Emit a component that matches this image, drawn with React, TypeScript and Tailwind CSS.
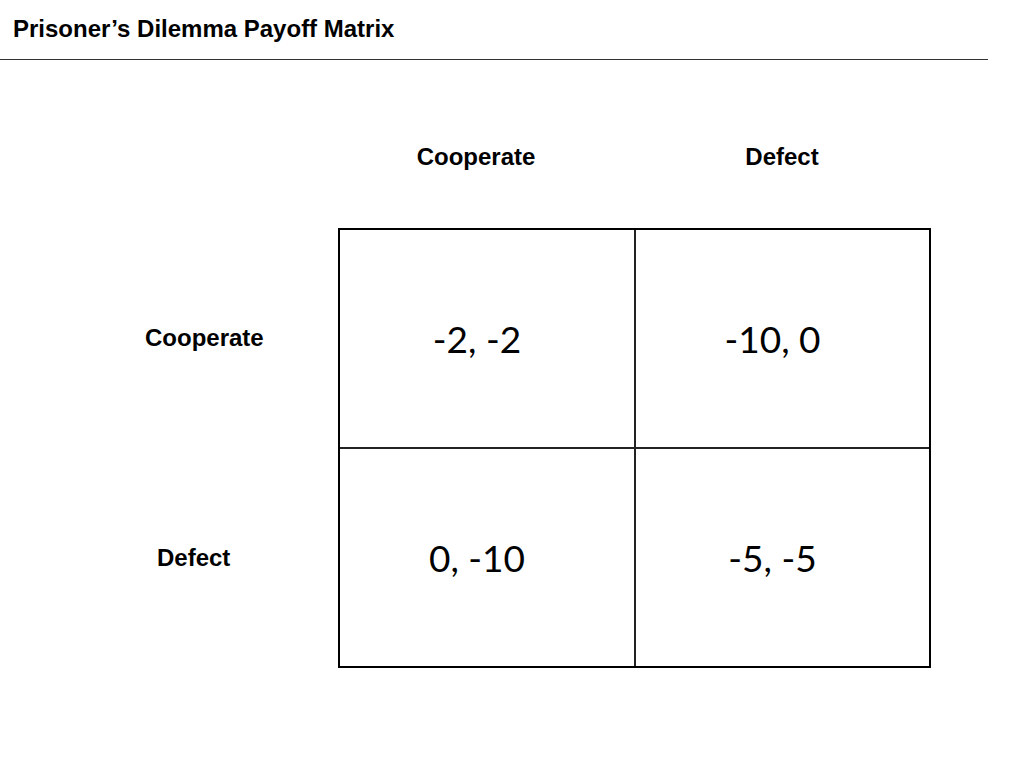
const payoffs = [
  ['-2, -2', '-10, 0'],
  ['0, -10', '-5, -5'],
];

const rows = [
  { label: 'Cooperate', indent: 'pl-[145px]' },
  { label: 'Defect', indent: 'pl-[157px]' },
];

export default function App() {
  return (
    <div className="w-[1024px] h-[768px] bg-white text-black font-['Liberation_Sans',Arial,sans-serif]">
      <div className="w-[988px] h-[60px] border-b border-[#333] pl-[13px] pt-[15px]">
        <h1 className="text-[24px] leading-[28px] font-bold">Prisoner’s Dilemma Payoff Matrix</h1>
      </div>

      <div className="flex pl-[338px] pt-[83px] h-[168px]">
        <div className="w-[296px] pr-5 text-center text-[24px] leading-[28px] font-bold">Cooperate</div>
        <div className="w-[296px] text-center text-[24px] leading-[28px] font-bold">Defect</div>
      </div>

      <div className="flex">
        <div className="w-[338px] flex flex-col">
          {rows.map((r) => (
            <div key={r.label} className={`h-[220px] flex items-center ${r.indent} text-[24px] font-bold`}>
              {r.label}
            </div>
          ))}
        </div>
        <div className="w-[593px] h-[440px] border-2 border-black grid grid-cols-[296px_1fr] grid-rows-[219px_1fr] font-['Lato','Open_Sans',sans-serif]">
          {payoffs.map((row, i) =>
            row.map((v, j) => (
              <div
                key={`${i}-${j}`}
                className={`flex items-center justify-center pr-5 text-[37px] ${j === 0 ? 'border-r-2 border-[#222]' : ''} ${i === 0 ? 'border-b-2 border-[#222]' : ''}`}
              >
                {v}
              </div>
            ))
          )}
        </div>
      </div>
    </div>
  );
}
